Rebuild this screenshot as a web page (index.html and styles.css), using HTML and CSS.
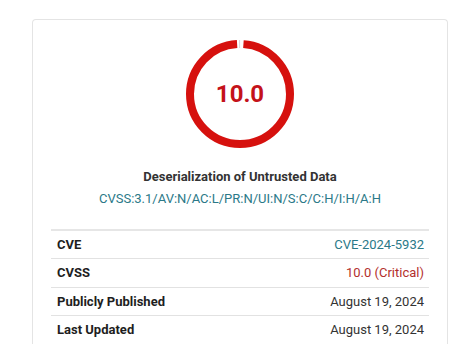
FILE: index.html
```html
<!DOCTYPE html>
<html lang="en">
	<head>
		<meta charset="utf-8">
		<title>CVE-2024-5932</title>
		<link rel="stylesheet" href="styles.css">
	</head>
	<body>
		<div id="score-card">
			<div id="gauge">
				<svg width="108" height="108" viewBox="0 0 108 108">
					<circle cx="54" cy="54" r="50" fill="none" stroke="#d6110e" stroke-width="8" stroke-dasharray="307.2 7" stroke-dashoffset="-3.5" transform="rotate(-90 54 54)"/>
					<line x1="53.6" y1="0" x2="53.6" y2="8" stroke="#d8d8d8" stroke-width="1"/>
				</svg>
				<span id="score">10.0</span>
			</div>
			<p id="weakness">Deserialization of Untrusted Data</p>
			<p id="vector"><a href="#">CVSS:3.1/AV:N/AC:L/PR:N/UI:N/S:C/C:H/I:H/A:H</a></p>
			<table id="details">
				<tr>
					<th>CVE</th>
					<td><a href="#">CVE-2024-5932</a></td>
				</tr>
				<tr>
					<th>CVSS</th>
					<td class="critical">10.0 (Critical)</td>
				</tr>
				<tr>
					<th>Publicly Published</th>
					<td>August 19, 2024</td>
				</tr>
				<tr>
					<th>Last Updated</th>
					<td>August 19, 2024</td>
				</tr>
			</table>
		</div>
	</body>
</html>
```

FILE: styles.css
```css
* {
	box-sizing:border-box}
a {
	color:#2b7988;
	text-decoration:none}
body {
	background-color:#ffffff;
	color:#222222;
	font-family:Roboto, "Liberation Sans", sans-serif;
	font-size:13px;
	margin:19px 0 0 32px}
#score-card {
	border:1px solid #e4e4e4;
	border-bottom:none;
	border-radius:4px 4px 0 0;
	padding:20px 18px 0;
	width:416px}
#gauge {
	height:108px;
	margin:0 auto;
	position:relative;
	width:108px}
#gauge svg {
	display:block}
#score {
	color:#c4121a;
	font-size:24px;
	font-weight:700;
	left:0;
	line-height:108px;
	position:absolute;
	text-align:center;
	top:0;
	width:108px}
#weakness {
	color:#333333;
	font-weight:700;
	line-height:22px;
	margin:18px 0 0;
	text-align:center}
#vector {
	line-height:22px;
	margin:0;
	text-align:center}
#details {
	border-collapse:collapse;
	margin-top:18.5px;
	width:100%}
#details tr {
	border-top:1px solid #e2e2e2}
#details tr:first-child {
	border-top:2px solid #e6e6e6}
#details th, #details td {
	line-height:17.5px;
	padding:5px 5px 5px 6px}
#details th {
	color:#1e1e1e;
	font-weight:700;
	text-align:left}
#details td {
	color:#333333;
	text-align:right}
#details td.critical {
	color:#b3302c}
```
